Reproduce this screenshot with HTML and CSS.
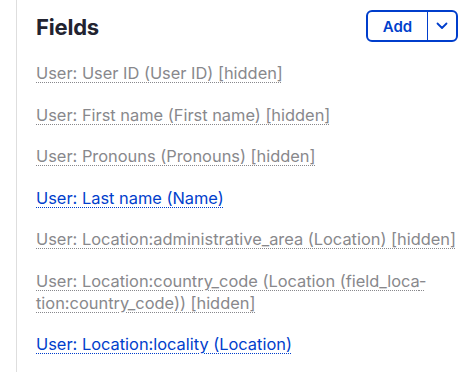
FILE: index.html
```html
<!DOCTYPE html>
<html>
<head>
<meta charset="utf-8">
<link rel="stylesheet" href="styles.css">
</head>
<body>
<div class="panel">
  <div class="header">
    <h2 class="title">Fields</h2>
    <div class="split">
      <span class="split-main">Add</span>
      <span class="split-toggle"><svg width="12" height="8" viewBox="0 0 12 8"><path d="M1.5 1.5 L6 6 L10.5 1.5" fill="none" stroke="#003ecc" stroke-width="1.8" stroke-linecap="round" stroke-linejoin="round"/></svg></span>
    </div>
  </div>
  <ul class="fields">
    <li><a class="field hidden" href="#">User: User ID (User ID) [hidden]</a></li>
    <li><a class="field hidden" href="#">User: First name (First name) [hidden]</a></li>
    <li><a class="field hidden" href="#">User: Pronouns (Pronouns) [hidden]</a></li>
    <li><a class="field" href="#">User: Last name (Name)</a></li>
    <li><a class="field hidden" href="#">User: Location:administrative_area (Location) [hidden]</a></li>
    <li><a class="field hidden" href="#">User: Location:country_code (Location (field_loca&shy;tion:country_code)) [hidden]</a></li>
    <li><a class="field" href="#">User: Location:locality (Location)</a></li>
  </ul>
</div>
</body>
</html>
```
FILE: styles.css
```css
html, body {
  margin: 0;
  padding: 0;
  background: #fff;
  font-family: Inter, "Noto Sans", sans-serif;
}
.panel {
  margin-left: 16px;
  border-left: 1px solid #dedede;
  padding: 10px 16px 0 19px;
  min-height: 372px;
  box-sizing: border-box;
}
.header {
  display: flex;
  justify-content: space-between;
  align-items: flex-start;
}
.title {
  margin: 3px 0 0;
  font-size: 22px;
  line-height: 28px;
  font-weight: 700;
  color: #222330;
  letter-spacing: -0.2px;
}
.split {
  display: flex;
  border: 2px solid #003ecc;
  border-radius: 6px;
  height: 28px;
  box-sizing: content-box;
}
.split-main {
  width: 59px;
  display: flex;
  align-items: center;
  justify-content: center;
  font-size: 15px;
  font-weight: 600;
  color: #003ecc;
  border-right: 1px solid #003ecc;
}
.split-toggle {
  width: 28px;
  display: flex;
  align-items: center;
  justify-content: center;
}
.fields {
  list-style: none;
  margin: 20px 0 0;
  padding: 0;
}
.fields li {
  margin-bottom: 19.5px;
  font-size: 16.4px;
  line-height: 22px;
}
.field {
  color: #003ecc;
  text-decoration: underline dotted;
  text-underline-offset: 3px;
  text-decoration-thickness: 1px;
}
.field.hidden {
  color: #88888c;
}
```
